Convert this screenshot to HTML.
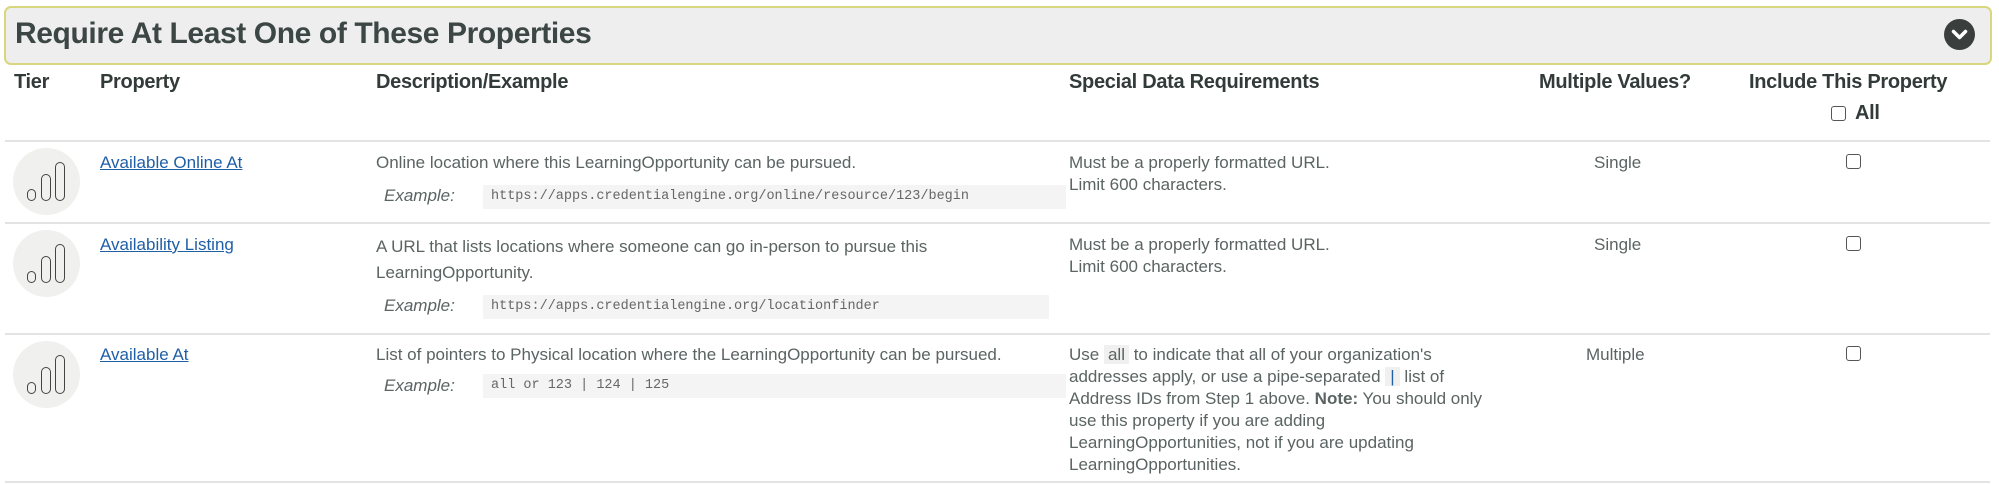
<!DOCTYPE html>
<html><head><meta charset="utf-8"><style>
body{margin:0;width:1999px;height:484px;background:#fff;font-family:"Liberation Sans",sans-serif;color:#5a6462;position:relative;overflow:hidden}
.a{position:absolute;white-space:nowrap}
.box{position:absolute;left:4px;top:6px;width:1984px;height:55px;background:#eeeeee;border:2px solid #d9d77e;border-radius:7px}
.title{left:15px;top:17px;font-size:30px;font-weight:bold;color:#3c4644;letter-spacing:-0.4px}
.h{font-size:20px;font-weight:bold;color:#333b3a;letter-spacing:-0.3px}
.t{font-size:17px;line-height:22px;color:#5a6462}
.lnk{color:#1f5fa6;text-decoration:underline}
.ex{font-style:italic;font-size:17px;color:#5a6462}
.code{position:absolute;background:#f4f4f4;font-family:"Liberation Mono",monospace;font-size:13.5px;color:#666;line-height:24px;padding-left:8px;box-sizing:border-box}
.line{position:absolute;left:5px;width:1985px;height:2px;background:#e3e3e3}
.cb{position:absolute;width:13px;height:13px;border:1.5px solid #555;border-radius:3px;background:#fff}
.ic{position:absolute;left:13px;width:67px;height:67px;border-radius:50%;background:#f0f0ee}
.ic i{position:absolute;bottom:14px;border:1.5px solid #444;border-radius:6px;box-sizing:border-box}
</style></head><body>
<div class="box"></div>
<div class="a title">Require At Least One of These Properties</div>
<svg class="a" style="left:1944px;top:19px" width="31" height="31" viewBox="0 0 31 31"><circle cx="15.5" cy="15.5" r="15.5" fill="#3a3f3e"/><path d="M9.5 12.5 L15.5 18.5 L21.5 12.5" stroke="#fff" stroke-width="3.5" fill="none" stroke-linecap="round" stroke-linejoin="round"/></svg>

<div class="a h" style="left:14px;top:71px">Tier</div>
<div class="a h" style="left:100px;top:71px">Property</div>
<div class="a h" style="left:376px;top:71px">Description/Example</div>
<div class="a h" style="left:1069px;top:71px">Special Data Requirements</div>
<div class="a h" style="left:1539px;top:71px">Multiple Values?</div>
<div class="a h" style="left:1749px;top:71px">Include This Property</div>
<div class="cb" style="left:1831px;top:106px"></div>
<div class="a h" style="left:1855px;top:102px">All</div>
<div class="line" style="top:140px"></div>

<!-- row 1 -->
<div class="ic" style="top:148px"><i style="left:14px;width:9px;height:12px"></i><i style="left:28px;width:10px;height:27px"></i><i style="left:42px;width:10px;height:39px"></i></div>
<div class="a t lnk" style="left:100px;top:152px">Available Online At</div>
<div class="a t" style="left:376px;top:152px">Online location where this LearningOpportunity can be pursued.</div>
<div class="a ex" style="left:384px;top:186px">Example:</div>
<div class="code" style="left:483px;top:185px;width:583px">https://apps.credentialengine.org/online/resource/123/begin</div>
<div class="a t" style="left:1069px;top:152px">Must be a properly formatted URL.<br>Limit 600 characters.</div>
<div class="a t" style="left:1594px;top:152px">Single</div>
<div class="cb" style="left:1846px;top:154px"></div>
<div class="line" style="top:222px"></div>

<!-- row 2 -->
<div class="ic" style="top:230px"><i style="left:14px;width:9px;height:12px"></i><i style="left:28px;width:10px;height:27px"></i><i style="left:42px;width:10px;height:39px"></i></div>
<div class="a t lnk" style="left:100px;top:234px">Availability Listing</div>
<div class="a t" style="left:376px;top:234px;line-height:26px">A URL that lists locations where someone can go in-person to pursue this<br>LearningOpportunity.</div>
<div class="a ex" style="left:384px;top:296px">Example:</div>
<div class="code" style="left:483px;top:295px;width:566px">https://apps.credentialengine.org/locationfinder</div>
<div class="a t" style="left:1069px;top:234px">Must be a properly formatted URL.<br>Limit 600 characters.</div>
<div class="a t" style="left:1594px;top:234px">Single</div>
<div class="cb" style="left:1846px;top:236px"></div>
<div class="line" style="top:333px"></div>

<!-- row 3 -->
<div class="ic" style="top:341px"><i style="left:14px;width:9px;height:12px"></i><i style="left:28px;width:10px;height:27px"></i><i style="left:42px;width:10px;height:39px"></i></div>
<div class="a t lnk" style="left:100px;top:344px">Available At</div>
<div class="a t" style="left:376px;top:344px">List of pointers to Physical location where the LearningOpportunity can be pursued.</div>
<div class="a ex" style="left:384px;top:376px">Example:</div>
<div class="code" style="left:483px;top:374px;width:583px">all or 123 | 124 | 125</div>
<div class="a t" style="left:1069px;top:344px">Use <span style="background:#f0f0f0;padding:0 4px">all</span> to indicate that all of your organization's<br>addresses apply, or use a pipe-separated <span style="background:#f0f0f0;padding:0 5px;color:#1f5fa6">|</span> list of<br>Address IDs from Step 1 above. <b>Note:</b> You should only<br>use this property if you are adding<br>LearningOpportunities, not if you are updating<br>LearningOpportunities.</div>
<div class="a t" style="left:1586px;top:344px">Multiple</div>
<div class="cb" style="left:1846px;top:346px"></div>
<div class="line" style="top:481px"></div>
</body></html>
